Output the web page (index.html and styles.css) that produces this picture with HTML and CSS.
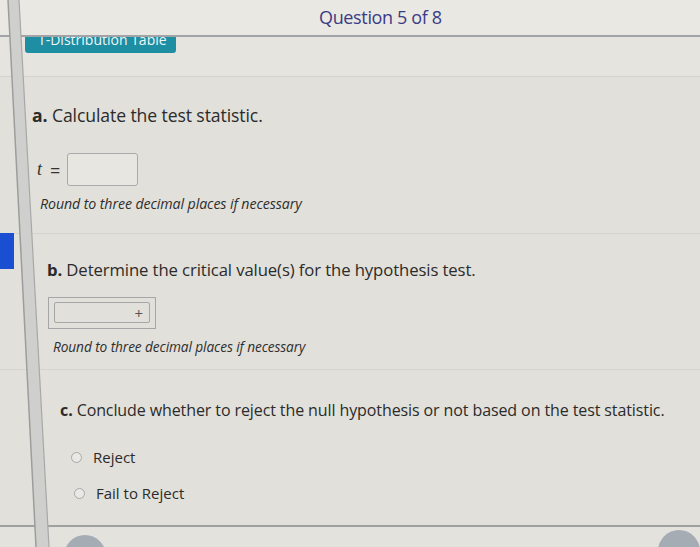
FILE: index.html
```html
<!DOCTYPE html>
<html>
<head>
<meta charset="utf-8">
<link rel="stylesheet" href="styles.css">
</head>
<body>
<div class="page">
  <header class="header">
    <span class="title">Question 5 of 8</span>
  </header>
  <div class="toolbar">
    <div class="tbtn"><span>T-Distribution Table</span></div>
  </div>

  <section class="part part-a">
    <h2 class="q"><b>a.</b> Calculate the test statistic.</h2>
    <div class="answer-row">
      <span class="var">t</span><span class="eq">=</span>
      <span class="box"></span>
    </div>
    <p class="hint">Round to three decimal places if necessary</p>
  </section>

  <section class="part part-b">
    <span class="marker"></span>
    <h2 class="q"><b>b.</b> Determine the critical value(s) for the hypothesis test.</h2>
    <div class="multi">
      <div class="multi-inner"><span class="plus">+</span></div>
    </div>
    <p class="hint">Round to three decimal places if necessary</p>
  </section>

  <section class="part part-c">
    <h2 class="q"><b>c.</b> Conclude whether to reject the null hypothesis or not based on the test statistic.</h2>
    <label class="opt opt1"><span class="radio"></span>Reject</label>
    <label class="opt opt2"><span class="radio"></span>Fail to Reject</label>
  </section>

  <footer class="footer">
    <span class="fab fab-left"></span>
    <span class="fab fab-right"></span>
  </footer>

  <svg class="bezel" width="700" height="547" viewBox="0 0 700 547">
    <polygon points="8,0 19,0 49,547 36,547" fill="#cfcfcd"/>
    <line x1="8" y1="0" x2="36" y2="547" stroke="#9d9d9d" stroke-width="1.5"/>
    <line x1="19" y1="0" x2="49" y2="547" stroke="#a8a8a8" stroke-width="1.2"/>
  </svg>
</div>
</body>
</html>
```
FILE: styles.css
```css
* { box-sizing: border-box; }
html, body { margin: 0; padding: 0; }
body {
  width: 700px;
  height: 547px;
  overflow: hidden;
  background: #e2e0da;
  font-family: "Open Sans", "Noto Sans", sans-serif;
  color: #2c2c2c;
}
.page {
  position: relative;
  width: 700px;
  height: 547px;
  overflow: hidden;
}
.header {
  height: 37px;
  background: #eae8e3;
  border-bottom: 2px solid #a2a3a6;
  padding-left: 319px;
  padding-top: 5px;
}
.title {
  font-size: 18px;
  color: #3b3b86;
  letter-spacing: -0.35px;
}
.toolbar {
  height: 40px;
  padding-left: 25px;
  border-bottom: 1px solid #d4d2cc;
  background: #e6e4de;
}
.tbtn {
  width: 151px;
  height: 16px;
  background: #1e8ea3;
  border-radius: 0 0 3px 3px;
  overflow: hidden;
  padding-left: 13px;
}
.tbtn span {
  display: block;
  margin-top: -6px;
  color: #eef6f8;
  font-size: 14px;
  line-height: 18px;
}
.part {
  position: relative;
  border-bottom: 1px solid #d6d4ce;
}
.q {
  margin: 0;
  font-weight: 400;
  font-size: 16px;
  color: #2b2b2b;
  letter-spacing: -0.1px;
}
.q b { font-weight: 700; }
.part-a {
  height: 157px;
  padding: 26px 0 0 32px;
}
.part-a .q { font-size: 17.6px; }
.answer-row {
  display: flex;
  align-items: center;
  margin-top: 26px;
  padding-left: 5px;
}
.var {
  font-family: "Liberation Serif", serif;
  font-style: italic;
  font-size: 18px;
  color: #333;
}
.eq {
  font-size: 18px;
  margin: 0 7px 0 8px;
  color: #333;
}
.box {
  width: 71px;
  height: 33px;
  border: 1.5px solid #a9aaab;
  border-radius: 3px;
  background: #e8e6e1;
}
.hint {
  margin: 8px 0 0 8px;
  font-style: italic;
  font-size: 14.2px;
  color: #2e2e2e;
  letter-spacing: -0.1px;
}
.part-b {
  height: 136px;
  padding: 24px 0 0 47px;
}
.part-b .q { font-size: 16.7px; }
.marker {
  position: absolute;
  left: 0;
  top: -1px;
  width: 14px;
  height: 36px;
  background: #1b4fd1;
}
.multi {
  width: 108px;
  height: 32px;
  margin-top: 16px;
  margin-left: 1px;
  border: 1.5px solid #a5a6a8;
  padding: 4px 5px;
}
.multi-inner {
  height: 21px;
  border: 1.5px solid #a5a6a8;
  border-radius: 2px;
  display: flex;
  align-items: center;
  justify-content: flex-end;
  padding-right: 6px;
}
.plus {
  font-size: 15px;
  line-height: 14px;
  color: #555;
}
.part-b .hint { margin: 8px 0 0 6px; font-size: 13.7px; }
.part-c {
  height: 157px;
  padding: 29px 0 0 60px;
  border-bottom: 2px solid #9fa0a2;
}
.opt {
  display: flex;
  align-items: center;
  font-size: 15px;
  color: #2b2b2b;
}
.radio {
  width: 11px;
  height: 11px;
  border-radius: 50%;
  border: 1.5px solid #a9a9a9;
  background: #e9e8e4;
  margin-right: 11px;
}
.opt1 { margin: 26px 0 0 11px; }
.opt2 { margin: 16px 0 0 14px; }
.footer {
  position: relative;
  height: 20px;
  background: #e4e2dd;
}
.fab {
  position: absolute;
  border-radius: 50%;
  background: #a5acb4;
}
.fab-left { left: 64px; top: 8px; width: 42px; height: 42px; }
.fab-right { left: 658px; top: 3px; width: 42px; height: 42px; }
.bezel {
  position: absolute;
  left: 0;
  top: 0;
  pointer-events: none;
}
```
